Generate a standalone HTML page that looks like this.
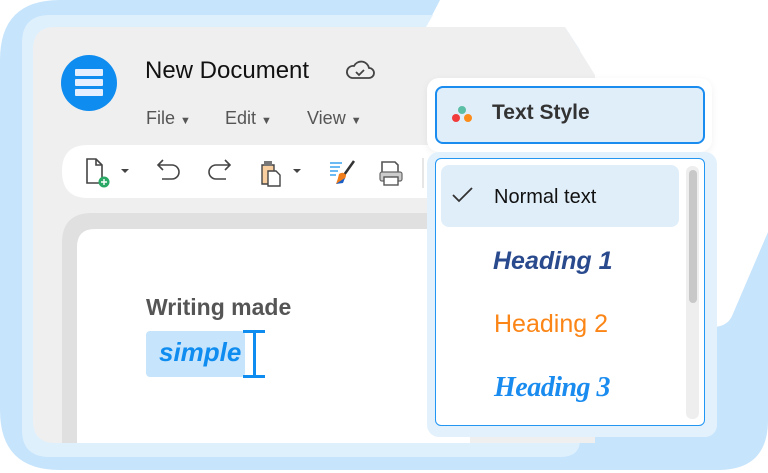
<!DOCTYPE html>
<html><head><style>
*{margin:0;padding:0;box-sizing:border-box}
body{width:768px;height:473px;overflow:hidden;background:#fff;font-family:"Liberation Sans",sans-serif;position:relative}
.a{position:absolute}
</style></head><body>
<svg class="a" style="left:0;top:0" width="768" height="473">
<path d="M60 0 H768 V420 Q768 470 718 470 H60 Q0 470 0 410 V60 Q0 0 60 0Z" fill="#c6e4fb"/>
<path d="M440 0 H768 V232 L732 316 Q727 327 712 327 H470 V27 H426Z" fill="#fff"/>
<path d="M50 15 H433 L426 27 H565 L580 50 V440 Q580 457 560 457 H50 Q22 457 22 430 V43 Q22 15 50 15Z" fill="#dff0fd"/>
<path d="M55 27 H565 L595 75 V443 H55 Q33 443 33 420 V50 Q33 27 55 27Z" fill="#efefef"/>
<path d="M92 213 H470 V443 H62 V243 Q62 213 92 213Z" fill="#e0e0e0"/>
<path d="M95 229 H470 V443 H77 V247 Q77 229 95 229Z" fill="#fff"/>
<path d="M88 145 H440 V198 H88 Q62 198 62 171 Q62 145 88 145Z" fill="#fff"/>
</svg>
<div class="a" style="left:61px;top:55px;width:56px;height:56px;border-radius:50%;background:#0f8cf0"></div>
<div class="a" style="left:75px;top:69px;width:28px;height:7px;background:#e6efff;border-radius:1px"></div>
<div class="a" style="left:75px;top:79px;width:28px;height:7px;background:#e6efff;border-radius:1px"></div>
<div class="a" style="left:75px;top:89px;width:28px;height:7px;background:#e6efff;border-radius:1px"></div>
<div class="a" style="left:145px;top:57px;font-size:24px;color:#111">New Document</div>
<svg class="a" style="left:344px;top:59px" width="32" height="22" viewBox="0 0 32 22"><path d="M8 19 H25 A5 5 0 0 0 25 9 A8 8 0 0 0 10 7 A6 6 0 0 0 8 19Z" fill="none" stroke="#444" stroke-width="1.8"/><path d="M12 13 l3 3 l5 -5" fill="none" stroke="#444" stroke-width="1.8"/></svg>
<div class="a" style="left:146px;top:108px;font-size:18px;color:#555">File <span style="font-size:11px">▼</span></div>
<div class="a" style="left:225px;top:108px;font-size:18px;color:#555">Edit <span style="font-size:11px">▼</span></div>
<div class="a" style="left:307px;top:108px;font-size:18px;color:#555">View <span style="font-size:11px">▼</span></div>
<svg class="a" style="left:80px;top:155px" width="360" height="35" viewBox="0 0 360 35">
<g fill="none" stroke="#444" stroke-width="1.6">
<path d="M7 4 H16 L22 10 V28 H7Z"/><path d="M16 4 V10 H22"/>
<path d="M78 10 H92 A6 6 0 0 1 92 24 H82 M83 5 L78 10 L83 15"/>
<path d="M150 10 H136 A6 6 0 0 0 136 24 H146 M145 5 L150 10 L145 15"/>
</g>
<path d="M182 10 H194 V29 H182Z" fill="#f9cfa0" stroke="#444" stroke-width="1.4"/>
<rect x="184" y="6" width="8" height="5" fill="#777"/>
<path d="M188 16 H196 L200 20 V31 H188Z" fill="#fff" stroke="#444" stroke-width="1.4"/>
<path d="M302 17 V7 H315 L318 10 V17" fill="none" stroke="#555" stroke-width="1.6"/>
<rect x="300" y="17" width="22" height="9" rx="2" fill="#ccc" stroke="#666" stroke-width="1.2"/>
<rect x="304" y="22" width="14" height="8" fill="#fff" stroke="#555" stroke-width="1.4"/>
<circle cx="24" cy="27" r="5.5" fill="#2aa865"/><path d="M24 24 V30 M21 27 H27" stroke="#fff" stroke-width="1.4"/>
<path d="M41 14 l4 4 l4 -4Z M213 14 l4 4 l4 -4Z" fill="#444"/>
<path d="M250 8 H262 M250 12 H260 M250 16 H258 M250 20 H256" stroke="#3ba3f0" stroke-width="1.5"/>
<path d="M274 6 L264 20" stroke="#333" stroke-width="2.5"/><path d="M259 19 q4 -3 7 1 q0 6 -10 9 q2 -5 3 -10Z" fill="#f07d1a"/><path d="M256 29 q4 -3 9 -6 l-2 5Z" fill="#1a5fc8"/>
<path d="M343 3 V33" stroke="#ccc"/>
</svg>
<div class="a" style="left:146px;top:294px;font-size:23px;font-weight:bold;color:#555">Writing made</div>
<div class="a" style="left:146px;top:331px;width:99px;height:46px;background:#c6e4fb;border-radius:4px"></div>
<div class="a" style="left:159px;top:337px;font-size:26px;font-style:italic;font-weight:bold;color:#0f8cf0">simple</div>
<div class="a" style="left:253px;top:331px;width:3px;height:46px;background:#0f8cf0"></div>
<div class="a" style="left:243px;top:330px;width:22px;height:3px;background:#0f8cf0"></div>
<div class="a" style="left:243px;top:375px;width:22px;height:3px;background:#0f8cf0"></div>
<div class="a" style="left:427px;top:78px;width:285px;height:74px;background:#fff;border-radius:12px;box-shadow:0 2px 8px rgba(0,0,0,.06)"></div>
<div class="a" style="left:427px;top:152px;width:290px;height:285px;background:#e3f1fd;border-radius:12px"></div>
<div class="a" style="left:435px;top:86px;width:270px;height:58px;background:#e0eefa;border:2.5px solid #1a8cf0;border-radius:8px"></div>
<svg class="a" style="left:450px;top:105px" width="24" height="20"><circle cx="12" cy="5" r="4" fill="#5bbfa5"/><circle cx="6" cy="13" r="4" fill="#f23c3c"/><circle cx="18" cy="13" r="4" fill="#fb8c1c"/></svg>
<div class="a" style="left:492px;top:101px;font-size:21px;font-weight:bold;color:#333">Text Style</div>
<div class="a" style="left:435px;top:158px;width:270px;height:268px;background:#fff;border:1.5px solid #2196f3;border-radius:6px"></div>
<div class="a" style="left:441px;top:165px;width:238px;height:62px;background:#e0eefa;border-radius:8px"></div>
<div class="a" style="left:686px;top:166px;width:13px;height:253px;background:#eee;border-radius:6px"></div>
<div class="a" style="left:689px;top:170px;width:8px;height:133px;background:#c8c8c8;border-radius:4px"></div>
<svg class="a" style="left:451px;top:186px" width="24" height="18"><path d="M2 9 l6 6 l13 -13" fill="none" stroke="#333" stroke-width="1.8"/></svg>
<div class="a" style="left:494px;top:186px;font-size:20px;color:#111">Normal text</div>
<div class="a" style="left:493px;top:247px;font-size:25px;font-weight:bold;font-style:italic;color:#2a4a8e">Heading 1</div>
<div class="a" style="left:494px;top:310px;font-size:25px;color:#fb8516">Heading 2</div>
<div class="a" style="left:494px;top:372px;font-size:28px;font-style:italic;font-weight:bold;color:#1a8cf0;font-family:'Liberation Serif',serif;letter-spacing:-0.5px">Heading 3</div>
</body></html>
